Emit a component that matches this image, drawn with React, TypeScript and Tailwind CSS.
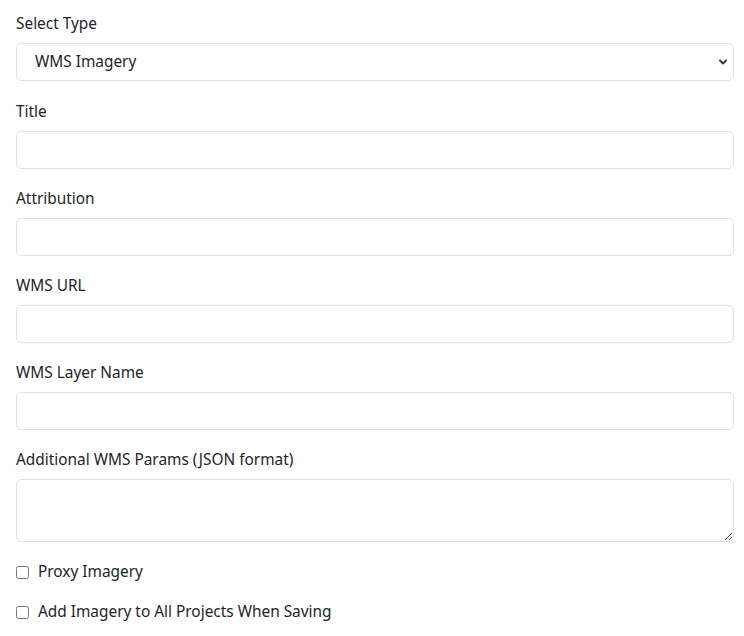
import { ChevronDown } from 'lucide-react'

const fields = ['Title', 'Attribution', 'WMS URL', 'WMS Layer Name']

const checks = ['Proxy Imagery', 'Add Imagery to All Projects When Saving']

export default function App() {
  return (
    <div className="h-[636px] overflow-hidden bg-white pl-4 pr-[10px] pt-[11px] text-[15.4px] text-[#212529] [font-family:'Noto_Sans',sans-serif]">
      <div className="mb-[18px]">
        <label className="mb-[6px] block leading-[26px]">Select Type</label>
        <div className="relative">
          <select className="block h-[38px] w-full appearance-none rounded-[5px] border border-[#dee2e6] bg-white pl-[18px] text-[15.4px] text-[#212529] outline-none">
            <option>WMS Imagery</option>
          </select>
          <ChevronDown className="pointer-events-none absolute right-[5px] top-[13px] h-3 w-3 text-[#343a40]" strokeWidth={4} />
        </div>
      </div>

      {fields.map((name) => (
        <div key={name} className="mb-[17px]">
          <label className="mb-[6px] block leading-[26px]">{name}</label>
          <input type="text" className="block h-[38px] w-full rounded-[5px] border border-[#dee2e6] bg-white px-3 outline-none" />
        </div>
      ))}

      <div className="mb-[18px]">
        <label className="mb-[6px] block leading-[26px]">Additional WMS Params (JSON format)</label>
        <textarea className="block h-[63px] w-full rounded-[5px] border border-[#dee2e6] bg-white px-3 outline-none" />
      </div>

      <div className="flex flex-col gap-[16px]">
        {checks.map((name) => (
          <label key={name} className="flex items-center gap-[9px] leading-6">
            <input type="checkbox" className="h-[13px] w-[13px]" />
            {name}
          </label>
        ))}
      </div>
    </div>
  )
}
